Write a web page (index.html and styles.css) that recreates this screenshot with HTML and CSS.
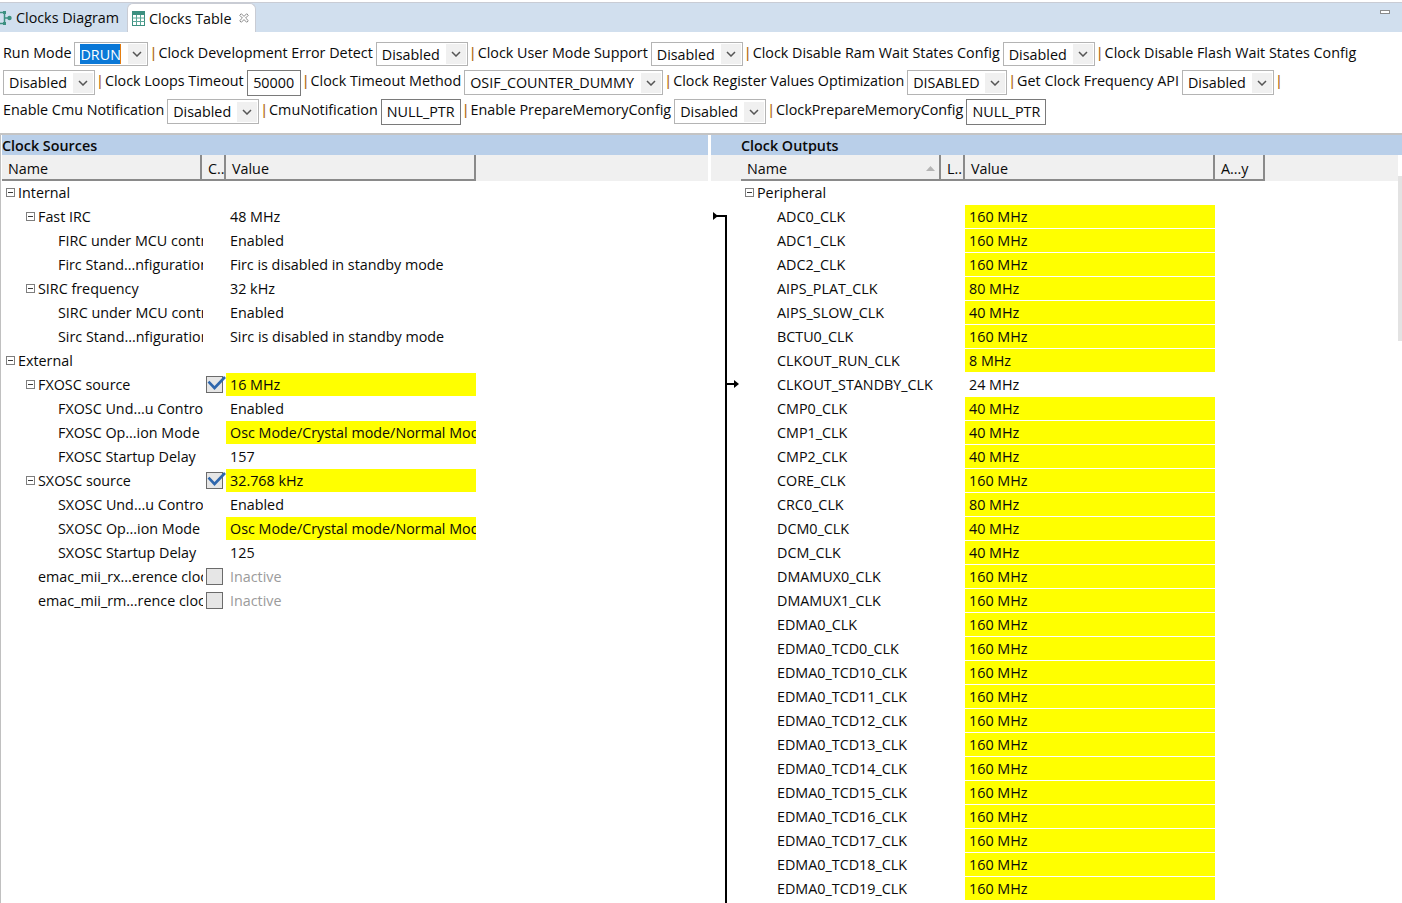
FILE: index.html
```html
<!DOCTYPE html>
<html lang="en">
<head>
<meta charset="utf-8">
<title>Clocks Table</title>
<link rel="stylesheet" href="styles.css">
</head>
<body>
<div class="tabbar">
  <div class="tab tab-plain">
    <svg class="ic" width="14" height="16" viewBox="0 0 14 16"><path d="M-3 2.500H5.500V13.500H-3" fill="none" stroke="#3c9080" stroke-width="1.500"/><rect x="4" y="1" width="3" height="3" fill="#3c9080"/><rect x="4" y="12" width="3" height="3" fill="#3c9080"/><path d="M6 8h4" stroke="#3c9080" stroke-width="1.500"/><circle cx="10.500" cy="8" r="2.200" fill="#3c9080"/></svg>
    <span>Clocks Diagram</span>
  </div>
  <div class="tab tab-active">
    <svg class="ic" width="13" height="15" viewBox="0 0 13 15"><rect x=".5" y=".5" width="12" height="14" fill="#fff" stroke="#3c8f80"/><rect x=".5" y=".5" width="12" height="3.500" fill="#3c8f80"/><path d="M.5 7h12M.5 10.500h12M4.500 4v10M8.500 4v10" stroke="#5aa596"/></svg>
    <span>Clocks Table</span>
    <svg class="close" width="10" height="10" viewBox="0 0 10 10"><path d="M.7 2.300L2.300.7 5 3.400 7.700.7 9.300 2.300 6.600 5 9.300 7.700 7.700 9.300 5 6.600 2.300 9.300.7 7.700 3.400 5z" fill="#fff" stroke="#8a8a8a"/></svg>
  </div>
  <div class="minimize"></div>
</div>

<div class="toolbar">
  <div class="tline">
    <span class="lbl">Run Mode</span>
    <span class="combo w74"><span class="sel">DRUN</span><span class="arr"><svg width="10" height="6" viewBox="0 0 10 6"><path d="M1 1l4 4 4-4" fill="none" stroke="#555" stroke-width="1.500"/></svg></span></span>
    <span class="sep">|</span><span class="lbl">Clock Development Error Detect</span>
    <span class="combo w92"><span class="val">Disabled</span><span class="arr"><svg width="10" height="6" viewBox="0 0 10 6"><path d="M1 1l4 4 4-4" fill="none" stroke="#555" stroke-width="1.500"/></svg></span></span>
    <span class="sep">|</span><span class="lbl">Clock User Mode Support</span>
    <span class="combo w92"><span class="val">Disabled</span><span class="arr"><svg width="10" height="6" viewBox="0 0 10 6"><path d="M1 1l4 4 4-4" fill="none" stroke="#555" stroke-width="1.500"/></svg></span></span>
    <span class="sep">|</span><span class="lbl">Clock Disable Ram Wait States Config</span>
    <span class="combo w92"><span class="val">Disabled</span><span class="arr"><svg width="10" height="6" viewBox="0 0 10 6"><path d="M1 1l4 4 4-4" fill="none" stroke="#555" stroke-width="1.500"/></svg></span></span>
    <span class="sep">|</span><span class="lbl">Clock Disable Flash Wait States Config</span>
  </div>
  <div class="tline">
    <span class="combo w92"><span class="val">Disabled</span><span class="arr"><svg width="10" height="6" viewBox="0 0 10 6"><path d="M1 1l4 4 4-4" fill="none" stroke="#555" stroke-width="1.500"/></svg></span></span>
    <span class="sep">|</span><span class="lbl">Clock Loops Timeout</span>
    <span class="text w54">50000</span>
    <span class="sep">|</span><span class="lbl">Clock Timeout Method</span>
    <span class="combo w199"><span class="val">OSIF_COUNTER_DUMMY</span><span class="arr"><svg width="10" height="6" viewBox="0 0 10 6"><path d="M1 1l4 4 4-4" fill="none" stroke="#555" stroke-width="1.500"/></svg></span></span>
    <span class="sep">|</span><span class="lbl">Clock Register Values Optimization</span>
    <span class="combo w100"><span class="val">DISABLED</span><span class="arr"><svg width="10" height="6" viewBox="0 0 10 6"><path d="M1 1l4 4 4-4" fill="none" stroke="#555" stroke-width="1.500"/></svg></span></span>
    <span class="sep">|</span><span class="lbl">Get Clock Frequency API</span>
    <span class="combo w92"><span class="val">Disabled</span><span class="arr"><svg width="10" height="6" viewBox="0 0 10 6"><path d="M1 1l4 4 4-4" fill="none" stroke="#555" stroke-width="1.500"/></svg></span></span>
    <span class="sep">|</span>
  </div>
  <div class="tline">
    <span class="lbl">Enable Cmu Notification</span>
    <span class="combo w92"><span class="val">Disabled</span><span class="arr"><svg width="10" height="6" viewBox="0 0 10 6"><path d="M1 1l4 4 4-4" fill="none" stroke="#555" stroke-width="1.500"/></svg></span></span>
    <span class="sep">|</span><span class="lbl">CmuNotification</span>
    <span class="text w80">NULL_PTR</span>
    <span class="sep">|</span><span class="lbl">Enable PrepareMemoryConfig</span>
    <span class="combo w92"><span class="val">Disabled</span><span class="arr"><svg width="10" height="6" viewBox="0 0 10 6"><path d="M1 1l4 4 4-4" fill="none" stroke="#555" stroke-width="1.500"/></svg></span></span>
    <span class="sep">|</span><span class="lbl">ClockPrepareMemoryConfig</span>
    <span class="text w80">NULL_PTR</span>
  </div>
</div>

<div class="panels">
  <section class="panel left">
    <h2 class="ptitle">Clock Sources</h2>
    <div class="thead">
      <div class="th c-name">Name</div><div class="th c-chk">C..</div><div class="th c-val">Value</div>
    </div>
    <div class="row"><div class="c-name l0"><i class="tog"></i>Internal</div></div>
    <div class="row"><div class="c-name l1"><i class="tog"></i>Fast IRC</div><div class="c-chk"></div><div class="c-val">48 MHz</div></div>
    <div class="row"><div class="c-name l2">FIRC under MCU control</div><div class="c-chk"></div><div class="c-val">Enabled</div></div>
    <div class="row"><div class="c-name l2">Firc Stand...nfiguration</div><div class="c-chk"></div><div class="c-val">Firc is disabled in standby mode</div></div>
    <div class="row"><div class="c-name l1"><i class="tog"></i>SIRC frequency</div><div class="c-chk"></div><div class="c-val">32 kHz</div></div>
    <div class="row"><div class="c-name l2">SIRC under MCU control</div><div class="c-chk"></div><div class="c-val">Enabled</div></div>
    <div class="row"><div class="c-name l2">Sirc Stand...nfiguration</div><div class="c-chk"></div><div class="c-val">Sirc is disabled in standby mode</div></div>
    <div class="row"><div class="c-name l0"><i class="tog"></i>External</div></div>
    <div class="row"><div class="c-name l1"><i class="tog"></i>FXOSC source</div><div class="c-chk"><span class="cb"><svg width="20" height="18" viewBox="0 0 20 18"><path d="M1.500 7.700l6 6.300L18 3" fill="none" stroke="#2f67ad" stroke-width="2.600"/></svg></span></div><div class="c-val hl">16 MHz</div></div>
    <div class="row"><div class="c-name l2">FXOSC Und...u Control</div><div class="c-chk"></div><div class="c-val">Enabled</div></div>
    <div class="row"><div class="c-name l2">FXOSC Op...ion Mode</div><div class="c-chk"></div><div class="c-val hl">Osc Mode/Crystal mode/Normal Mode</div></div>
    <div class="row"><div class="c-name l2">FXOSC Startup Delay</div><div class="c-chk"></div><div class="c-val">157</div></div>
    <div class="row"><div class="c-name l1"><i class="tog"></i>SXOSC source</div><div class="c-chk"><span class="cb"><svg width="20" height="18" viewBox="0 0 20 18"><path d="M1.500 7.700l6 6.300L18 3" fill="none" stroke="#2f67ad" stroke-width="2.600"/></svg></span></div><div class="c-val hl">32.768 kHz</div></div>
    <div class="row"><div class="c-name l2">SXOSC Und...u Control</div><div class="c-chk"></div><div class="c-val">Enabled</div></div>
    <div class="row"><div class="c-name l2">SXOSC Op...ion Mode</div><div class="c-chk"></div><div class="c-val hl">Osc Mode/Crystal mode/Normal Mode</div></div>
    <div class="row"><div class="c-name l2">SXOSC Startup Delay</div><div class="c-chk"></div><div class="c-val">125</div></div>
    <div class="row"><div class="c-name l1b">emac_mii_rx...erence clock</div><div class="c-chk"><span class="cb"></span></div><div class="c-val dim">Inactive</div></div>
    <div class="row"><div class="c-name l1b">emac_mii_rm...rence clock</div><div class="c-chk"><span class="cb"></span></div><div class="c-val dim">Inactive</div></div>
  </section>

  <section class="panel right">
    <h2 class="ptitle">Clock Outputs</h2>
    <div class="thead">
      <div class="th c-name">Name<svg class="sort" width="9" height="5" viewBox="0 0 9 5"><path d="M0 5L4.500 0 9 5z" fill="#b5b5b5"/></svg></div><div class="th c-chk">L..</div><div class="th c-val">Value</div><div class="th c-any">A...y</div>
    </div>
    <div class="row"><div class="c-name l0"><i class="tog"></i>Peripheral</div></div>
    <div class="row"><div class="c-name l1">ADC0_CLK</div><div class="c-chk"></div><div class="c-val hl">160 MHz</div></div>
    <div class="row"><div class="c-name l1">ADC1_CLK</div><div class="c-chk"></div><div class="c-val hl">160 MHz</div></div>
    <div class="row"><div class="c-name l1">ADC2_CLK</div><div class="c-chk"></div><div class="c-val hl">160 MHz</div></div>
    <div class="row"><div class="c-name l1">AIPS_PLAT_CLK</div><div class="c-chk"></div><div class="c-val hl">80 MHz</div></div>
    <div class="row"><div class="c-name l1">AIPS_SLOW_CLK</div><div class="c-chk"></div><div class="c-val hl">40 MHz</div></div>
    <div class="row"><div class="c-name l1">BCTU0_CLK</div><div class="c-chk"></div><div class="c-val hl">160 MHz</div></div>
    <div class="row"><div class="c-name l1">CLKOUT_RUN_CLK</div><div class="c-chk"></div><div class="c-val hl">8 MHz</div></div>
    <div class="row"><div class="c-name l1">CLKOUT_STANDBY_CLK</div><div class="c-chk"></div><div class="c-val">24 MHz</div></div>
    <div class="row"><div class="c-name l1">CMP0_CLK</div><div class="c-chk"></div><div class="c-val hl">40 MHz</div></div>
    <div class="row"><div class="c-name l1">CMP1_CLK</div><div class="c-chk"></div><div class="c-val hl">40 MHz</div></div>
    <div class="row"><div class="c-name l1">CMP2_CLK</div><div class="c-chk"></div><div class="c-val hl">40 MHz</div></div>
    <div class="row"><div class="c-name l1">CORE_CLK</div><div class="c-chk"></div><div class="c-val hl">160 MHz</div></div>
    <div class="row"><div class="c-name l1">CRC0_CLK</div><div class="c-chk"></div><div class="c-val hl">80 MHz</div></div>
    <div class="row"><div class="c-name l1">DCM0_CLK</div><div class="c-chk"></div><div class="c-val hl">40 MHz</div></div>
    <div class="row"><div class="c-name l1">DCM_CLK</div><div class="c-chk"></div><div class="c-val hl">40 MHz</div></div>
    <div class="row"><div class="c-name l1">DMAMUX0_CLK</div><div class="c-chk"></div><div class="c-val hl">160 MHz</div></div>
    <div class="row"><div class="c-name l1">DMAMUX1_CLK</div><div class="c-chk"></div><div class="c-val hl">160 MHz</div></div>
    <div class="row"><div class="c-name l1">EDMA0_CLK</div><div class="c-chk"></div><div class="c-val hl">160 MHz</div></div>
    <div class="row"><div class="c-name l1">EDMA0_TCD0_CLK</div><div class="c-chk"></div><div class="c-val hl">160 MHz</div></div>
    <div class="row"><div class="c-name l1">EDMA0_TCD10_CLK</div><div class="c-chk"></div><div class="c-val hl">160 MHz</div></div>
    <div class="row"><div class="c-name l1">EDMA0_TCD11_CLK</div><div class="c-chk"></div><div class="c-val hl">160 MHz</div></div>
    <div class="row"><div class="c-name l1">EDMA0_TCD12_CLK</div><div class="c-chk"></div><div class="c-val hl">160 MHz</div></div>
    <div class="row"><div class="c-name l1">EDMA0_TCD13_CLK</div><div class="c-chk"></div><div class="c-val hl">160 MHz</div></div>
    <div class="row"><div class="c-name l1">EDMA0_TCD14_CLK</div><div class="c-chk"></div><div class="c-val hl">160 MHz</div></div>
    <div class="row"><div class="c-name l1">EDMA0_TCD15_CLK</div><div class="c-chk"></div><div class="c-val hl">160 MHz</div></div>
    <div class="row"><div class="c-name l1">EDMA0_TCD16_CLK</div><div class="c-chk"></div><div class="c-val hl">160 MHz</div></div>
    <div class="row"><div class="c-name l1">EDMA0_TCD17_CLK</div><div class="c-chk"></div><div class="c-val hl">160 MHz</div></div>
    <div class="row"><div class="c-name l1">EDMA0_TCD18_CLK</div><div class="c-chk"></div><div class="c-val hl">160 MHz</div></div>
    <div class="row"><div class="c-name l1">EDMA0_TCD19_CLK</div><div class="c-chk"></div><div class="c-val hl">160 MHz</div></div>
    <svg class="wires" width="30" height="722" viewBox="0 0 30 722">
      <path d="M15 34V722M16 35H5M15 203H25" fill="none" stroke="#000" stroke-width="2"/>
      <path d="M2 31l5 4-5 4zM23 199l5 4-5 4z" fill="#000"/>
    </svg>
    <div class="scrollthumb"></div>
  </section>
</div>
</body>
</html>
```
FILE: styles.css
```css
html, body {
  margin: 0;
  padding: 0;
  height: 903px;
  overflow: hidden;
  background: #fff;
  color: #0a0a0a;
  font-family: "Open Sans", "Noto Sans", sans-serif;
  font-size: 14.33px;
}
.tabbar {
  margin-top: 2px;
  height: 30px;
  box-sizing: border-box;
  border-top: 1px solid #c9ccd4;
  background: #d1dfee;
  display: flex;
  align-items: flex-end;
  position: relative;
}
.tab {
  display: flex;
  align-items: center;
  height: 29px;
  box-sizing: border-box;
}
.tab-plain {
  width: 127px;
}
.tab-plain .ic { margin-right: 3px; margin-left: -1px; }
.tab-active {
  width: 129px;
  background: #fff;
  border: 1px solid #c9ccd4;
  border-bottom: 0;
  border-radius: 6px 6px 0 0;
  padding-left: 4px;
}
.tab-active .ic { margin-right: 4px; }
.tab-active .close { margin-left: 7px; }
.minimize {
  position: absolute;
  right: 12px;
  top: 7px;
  width: 10px;
  height: 4px;
  border: 1px solid #8a8a8a;
  background: #fff;
  box-sizing: border-box;
}
.toolbar {
  height: 101px;
  padding-top: 8px;
  box-sizing: border-box;
}
.tline {
  display: flex;
  align-items: flex-start;
  height: 29px;
  box-sizing: border-box;
  padding: 2px 0 0 3px;
  white-space: nowrap;
}
.tline:first-child { height: 28px; }
.lbl { line-height: 22px; }
.sep {
  color: #b06a14;
  line-height: 22px;
  margin: 0 3px;
  font-family: "Liberation Sans", sans-serif;
  font-size: 15px;
}
.combo, .text {
  display: inline-flex;
  align-items: center;
  box-sizing: border-box;
  height: 25px;
  margin-left: 3px;
  background: #fff;
  border: 1px solid #b4b4b4;
  padding: 0 0 0 5px;
}
.tline:first-child .combo { height: 24px; }
.tline:first-child .val { padding-bottom: 0; }
.tline > .combo:first-child { margin-left: 0; }
.text {
  border-color: #7a7a7a;
  height: 26px;
  justify-content: center;
  padding: 0 0 1px;
}
.val { flex: 1; padding-bottom: 1px; }
.sel {
  background: #0a78d7;
  color: #fff;
  flex: none;
  width: 41px;
  box-sizing: border-box;
  margin-right: 7px;
  padding-top: 1px;
  line-height: 19px;
  border-right: 1px solid #e07a10;
}
.arr {
  width: 20px;
  height: 20px;
  margin-right: 1px;
  background: #f0f0f0;
  display: flex;
  align-items: center;
  justify-content: center;
  flex: none;
}
.w74 .arr { width: 18px; }
.w74 { width: 74px; }
.w92 { width: 92px; }
.w54 { width: 54px; }
.w80 { width: 80px; }
.w199 { width: 199px; }
.w100 { width: 100px; }

.panels {
  border-top: 2px solid #c4c4c4;
  display: flex;
  height: 770px;
  overflow: hidden;
}
.panel {
  box-sizing: border-box;
  position: relative;
  height: 770px;
  overflow: hidden;
}
.left {
  width: 708px;
  border-left: 1px solid #c0c0c0;
  padding-left: 1px;
}
.right {
  width: 691px;
  margin-left: 3px;
  padding-left: 30px;
}
.ptitle {
  margin: 0;
  height: 20px;
  line-height: 22px;
  background: #b9cfe9;
  font-size: 14.33px;
  font-weight: 600;
}
.right .ptitle { margin-left: -30px; padding-left: 30px; }
.thead {
  display: flex;
  height: 26px;
  background: #f0f0f0;
}
.right .thead { margin-left: -30px; padding-left: 30px; margin-right: 4px; }
.th {
  box-sizing: border-box;
  height: 26px;
  line-height: 27px;
  background: #f0f0f0;
  border-right: 2px solid #8a8a8a;
  border-bottom: 2px solid #8a8a8a;
  position: relative;
}
.c-name { width: 200px; flex: none; white-space: nowrap; overflow: hidden; box-sizing: border-box; }
.row .c-name { width: 201px; margin-right: -1px; }
.c-chk { width: 24px; flex: none; position: relative; box-sizing: border-box; }
.c-val { width: 250px; flex: none; white-space: nowrap; overflow: hidden; box-sizing: border-box; padding-left: 4px; }
.c-any { width: 50px; flex: none; }
.th.c-name, .th.c-chk, .th.c-val, .th.c-any { padding-left: 6px; }
.sort { position: absolute; right: 4px; top: 11px; }
.row {
  display: flex;
  height: 24px;
  line-height: 24px;
}
.hl { background: #ffff00; border-bottom: 1px solid #fff; }
.dim { color: #9b9b9b; }
.l0 { padding-left: 4px; }
.l1 { padding-left: 24px; }
.l1b { padding-left: 36px; }
.l2 { padding-left: 56px; }
.right .l0 { padding-left: 4px; }
.right .l1 { padding-left: 36px; }
.tog {
  display: inline-block;
  box-sizing: border-box;
  width: 9px;
  height: 9px;
  border: 1px solid #7e7e7e;
  margin-right: 3px;
  position: relative;
  top: -1px;
  background: linear-gradient(#3a3a3a, #3a3a3a) center / 5px 1px no-repeat #fff;
}
.cb {
  display: block;
  box-sizing: border-box;
  width: 17px;
  height: 17px;
  margin: 3px 0 0 4px;
  border: 1px solid #6b6b6b;
  background: #e6e6e6;
  position: relative;
}
.cb svg { position: absolute; left: 0; top: -3px; overflow: visible; }
.wires { position: absolute; left: 0; top: 46px; }
.scrollthumb {
  position: absolute;
  right: 0;
  top: 41px;
  width: 4px;
  height: 165px;
  background: #e3e3e3;
}
```
